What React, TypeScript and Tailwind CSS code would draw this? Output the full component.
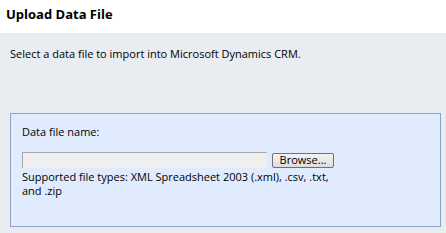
export default function App() {
  return (
    <main className="flex h-[233px] w-[446px] flex-col bg-[#e9ecf0] font-['Open_Sans',sans-serif] text-[11px] text-black">
      <div className="h-[33px] bg-white px-[6px] pt-[4px]">
        <h1 className="text-[13px] font-bold leading-[20px]">Upload Data File</h1>
      </div>

      <p className="px-[10px] pt-[13px] leading-[16px]">
        Select a data file to import into Microsoft Dynamics CRM.
      </p>

      <section className="mx-[10px] mt-[51px] h-[114px] w-[431px] border border-[#8ea3be] bg-[#e0ecfd] px-[11px] pt-[10px]">
        <p className="leading-[16px]">Data file name:</p>
        <div className="mt-[12px] flex items-center gap-[5px]">
          <div className="h-[16px] w-[245px] border-t border-l border-[#a8a8a8] bg-[#efefef]" />
          <button className="h-[15px] w-[62px] rounded-[2px] border border-[#707070] bg-gradient-to-b from-[#f4f4f4] to-[#dddddd] text-[11px] leading-[12px]">
            Browse...
          </button>
        </div>
        <p className="mt-[2px] w-[318px] leading-[14px]">
          Supported file types: XML Spreadsheet 2003 (.xml), .csv, .txt, and .zip
        </p>
      </section>
    </main>
  );
}
